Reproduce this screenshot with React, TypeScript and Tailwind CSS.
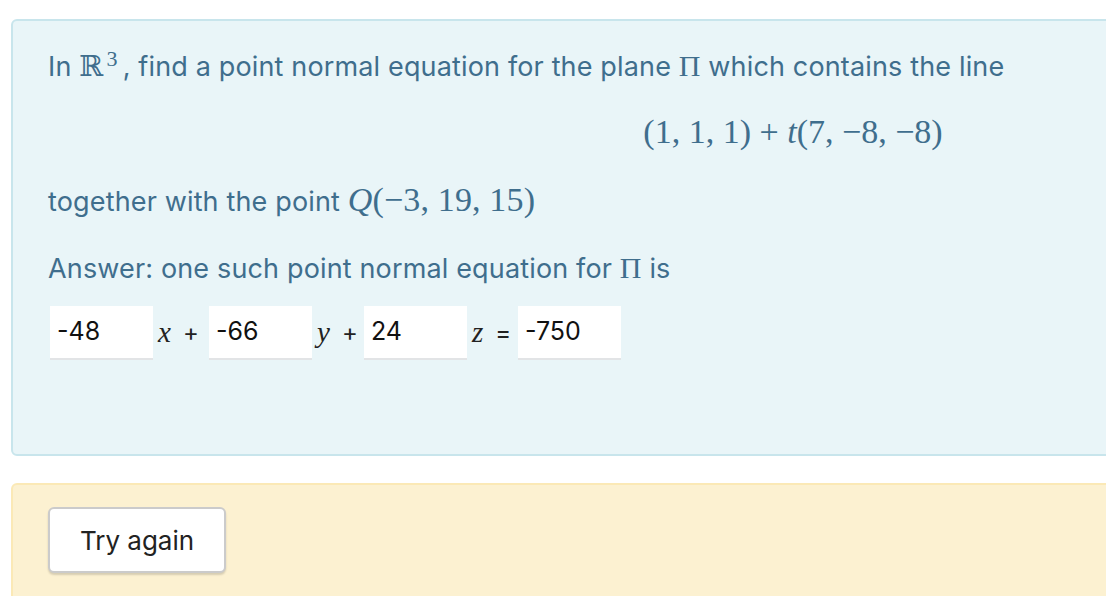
const sans = "font-['Inter','Roboto',sans-serif]";
const serif = "font-['Liberation_Serif','DejaVu_Serif',serif]";

const AnswerBox = ({ value }: { value: string }) => (
    <div className={`w-[103px] h-[54px] bg-white border-b-2 border-[#e2e4e6] flex items-center pl-[7px] text-[25px] text-[#111] ${sans}`}>
        {value}
    </div>
);

const Label = ({ v, op, w }: { v: string; op: string; w: string }) => (
    <div className={`${w} flex items-center pl-[5px] text-[24px] text-[#222]`}>
        <span className={`${serif} italic text-[29px] mr-[12px]`}>{v}</span>
        <span className={sans}>{op}</span>
    </div>
);

export default function App() {
    return (
        <div className={`w-[1106px] h-[596px] overflow-hidden bg-white pt-[19px] pl-[11px] ${sans}`}>
            <div className="w-[1566px] bg-[#e9f5f8] border-2 border-[#c8e5ec] rounded-md pt-[27px] pb-[94px] pl-[35px] text-[#3f6e8d]">
                <p className="text-[27px] tracking-[0.15px] leading-[36px]">
                    In <span className={`${serif} text-[29px]`}>ℝ</span>
                    <sup className={`${serif} text-[22px] ml-[3px] mr-[5px] relative -top-[10px]`}>3</sup>, find a point normal equation for the plane{' '}
                    <span className={`${serif} text-[30px]`}>Π</span> which contains the line
                </p>
                <p className={`${serif} text-[34px] leading-[36px] mt-[29px] text-center pr-[37px]`}>
                    (1, 1, 1) + <i>t</i>(7, −8, −8)
                </p>
                <p className="text-[27px] tracking-[0.15px] leading-[36px] mt-[32px]">
                    together with the point{' '}
                    <span className={`${serif} text-[34px]`}><i>Q</i>(−3, 19, 15)</span>
                </p>
                <p className="text-[27px] tracking-[0.15px] leading-[36px] mt-[30px]">
                    Answer: one such point normal equation for{' '}
                    <span className={`${serif} text-[30px]`}>Π</span> is
                </p>
                <div className="flex items-center mt-[19px] ml-[2px]">
                    <AnswerBox value="-48" />
                    <Label v="x" op="+" w="w-[56px]" />
                    <AnswerBox value="-66" />
                    <Label v="y" op="+" w="w-[52px]" />
                    <AnswerBox value="24" />
                    <Label v="z" op="=" w="w-[51px]" />
                    <AnswerBox value="-750" />
                </div>
            </div>
            <div className="w-[1566px] h-[200px] mt-[27px] bg-[#fcf1d1] border-2 border-[#fbe9b6] rounded-md pt-[22px] pl-[35px]">
                <button className={`w-[178px] h-[66px] bg-white border-2 border-[#cbcbcb] rounded-[6px] shadow-[0_2px_2px_rgba(0,0,0,0.15)] text-[26px] text-[#222] ${sans}`}>
                    Try again
                </button>
            </div>
        </div>
    );
}
